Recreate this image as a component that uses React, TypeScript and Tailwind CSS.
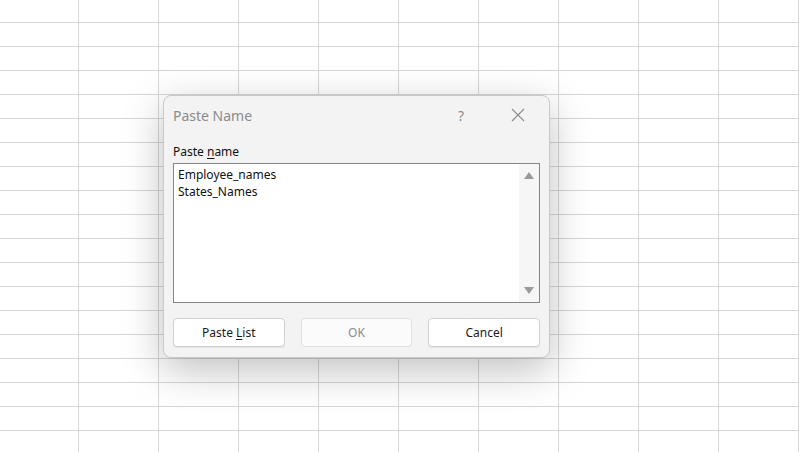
const COLS = 10;
const ROWS = 19;

function SheetGrid() {
  return (
    <div className="flex flex-col">
      {Array.from({ length: ROWS }).map((_, r) => (
        <div key={r} className="flex">
          {Array.from({ length: COLS }).map((_, c) => (
            <div
              key={c}
              className={`shrink-0 border-r border-b border-[#d6d6d6] ${c === 0 ? 'w-[79px]' : 'w-[80px]'} ${r === 0 ? 'h-[23px]' : 'h-[24px]'}`}
            />
          ))}
        </div>
      ))}
    </div>
  );
}

function Button({ children, disabled }: { children: React.ReactNode; disabled?: boolean }) {
  return (
    <button
      className={`h-[29px] rounded-[4px] border text-[12px] ${
        disabled
          ? 'border-[#e0e0e0] bg-[#fbfbfb] text-[#8a8a8a]'
          : 'border-[#d0d0d0] bg-white text-[#1a1a1a] shadow-[0_1px_0_rgba(0,0,0,0.06)]'
      }`}
    >
      {children}
    </button>
  );
}

export default function App() {
  return (
    <div className="relative h-[452px] w-[799px] overflow-hidden bg-white font-['Segoe_UI','Noto_Sans',sans-serif]">
      <SheetGrid />

      {/* Paste Name dialog */}
      <div className="absolute left-[163px] top-[95px] flex h-[263px] w-[387px] flex-col rounded-lg border border-[#c9c9c9] bg-[#f3f3f3] px-[9px] pb-[10px] shadow-[0_12px_40px_rgba(0,0,0,0.25)]">
        <div className="flex h-[38px] shrink-0 items-center">
          <span className="text-[14px] text-[#8b8b8b]">Paste Name</span>
          <span className="ml-auto mr-[47px] text-[14px] text-[#8b8b8b]">?</span>
          <svg className="mr-[15px] h-[14px] w-[14px]" viewBox="0 0 14 14" fill="none" stroke="#8b8b8b" strokeWidth="1.1">
            <path d="M1 1L13 13M13 1L1 13" />
          </svg>
        </div>

        <div className="mt-[9px] text-[12px] leading-[18px] text-[#111]">
          Paste <span className="underline underline-offset-2">n</span>ame
        </div>

        <div className="mt-[2px] flex h-[140px] shrink-0 border border-[#858585] bg-white">
          <div className="flex-1 px-[4px] pt-[2px] text-[12px] leading-[17px] text-[#111]">
            <div>Employee_names</div>
            <div>States_Names</div>
          </div>
          <div className="flex w-[20px] flex-col items-center justify-between bg-[#f6f6f6] py-[8px]">
            <svg width="10" height="7" viewBox="0 0 10 7">
              <path d="M5 0L10 7H0Z" fill="#9a9a9a" />
            </svg>
            <svg width="10" height="7" viewBox="0 0 10 7">
              <path d="M0 0H10L5 7Z" fill="#9a9a9a" />
            </svg>
          </div>
        </div>

        <div className="mt-auto grid grid-cols-3 gap-4">
          <Button>
            Paste <span className="underline underline-offset-2">L</span>ist
          </Button>
          <Button disabled>OK</Button>
          <Button>Cancel</Button>
        </div>
      </div>
    </div>
  );
}
